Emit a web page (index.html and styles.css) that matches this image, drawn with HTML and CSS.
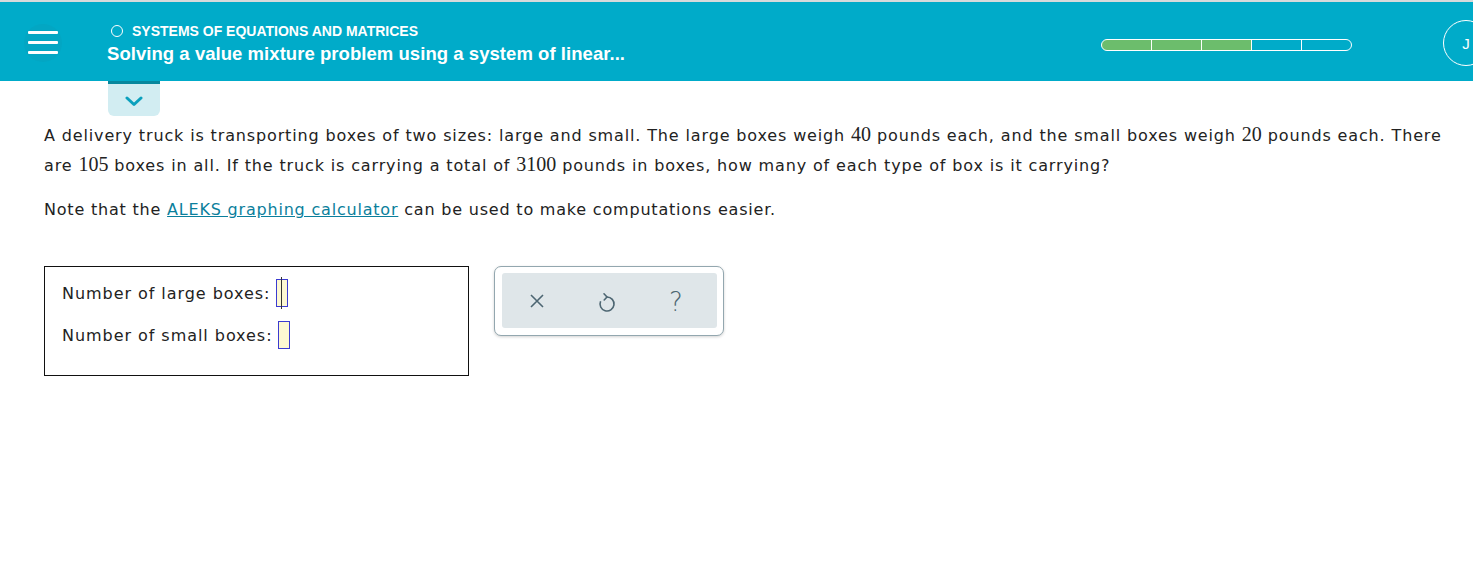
FILE: index.html
```html
<!DOCTYPE html>
<html>
<head>
<meta charset="utf-8">
<link rel="stylesheet" href="styles.css">
</head>
<body>
<header class="topbar">
  <button class="menu" aria-label="menu">
    <span></span><span></span><span></span>
  </button>
  <div class="titles">
    <div class="topic"><span class="ring"></span>SYSTEMS OF EQUATIONS AND MATRICES</div>
    <div class="lesson">Solving a value mixture problem using a system of linear...</div>
  </div>
  <div class="progress">
    <span class="seg done first"></span><span class="seg done"></span><span class="seg done"></span><span class="seg"></span><span class="seg last"></span>
  </div>
  <div class="avatar">J</div>
</header>
<div class="tab">
  <svg width="18" height="12" viewBox="0 0 18 12"><path d="M2 3 L9 9.5 L16 3" fill="none" stroke="#0aa0bd" stroke-width="3" stroke-linecap="round" stroke-linejoin="round"/></svg>
</div>
<main class="content">
  <p class="problem">A delivery truck is transporting boxes of two sizes: large and small. The large boxes weigh <span class="num">40</span> pounds each, and the small boxes weigh <span class="num">20</span> pounds each. There are <span class="num">105</span> boxes in all. If the truck is carrying a total of <span class="num">3100</span> pounds in boxes, how many of each type of box is it carrying?</p>
  <p class="note">Note that the <a href="#">ALEKS graphing calculator</a> can be used to make computations easier.</p>
  <div class="answer-row">
    <div class="answer">
      <div class="line">Number of large boxes: <span class="inp active"><span class="caret"></span></span></div>
      <div class="line">Number of small boxes: <span class="inp"></span></div>
    </div>
    <div class="tools">
      <div class="tools-inner">
        <svg class="ico x" width="16" height="16" viewBox="0 0 16 16"><path d="M2 2 L14 14 M14 2 L2 14" stroke="#4d6672" stroke-width="1.6" fill="none"/></svg>
        <svg class="ico undo" width="20" height="22" viewBox="0 0 20 22"><path d="M10 6 A7 7 0 1 1 3.6 10.2" fill="none" stroke="#4d6672" stroke-width="1.6"/><path d="M7 2.8 L10 6 L7.2 9" fill="none" stroke="#4d6672" stroke-width="1.6" stroke-linejoin="round" stroke-linecap="round"/></svg>
        <span class="help">?</span>
      </div>
    </div>
  </div>
</main>
</body>
</html>
```
FILE: styles.css
```css
* { box-sizing: border-box; }
html, body { margin: 0; padding: 0; background: #fff; }
body { font-family: "DejaVu Sans", Verdana, sans-serif; color: #222; overflow: hidden; }

.topbar {
  height: 81px;
  border-top: 2px solid #d6dadb;
  background: #00abc9;
  display: flex;
  align-items: center;
  overflow: hidden;
  color: #fff;
  font-family: "Liberation Sans", Arial, sans-serif;
}
.menu {
  margin-left: 24px;
  width: 38px;
  height: 38px;
  border-radius: 50%;
  border: none;
  background: #03a6c3;
  display: flex;
  flex-direction: column;
  justify-content: center;
  align-items: center;
  gap: 7px;
  padding: 0;
  margin-top: 2px;
}
.menu span { display: block; width: 30px; height: 3px; background: #fff; border-radius: 1px; }

.titles { margin-left: 45px; margin-top: 3px; }
.topic {
  font-size: 14px;
  font-weight: bold;
  letter-spacing: 0;
  display: flex;
  align-items: center;
  line-height: 16px;
}
.ring {
  width: 12px; height: 12px;
  border: 1.5px solid #fff;
  border-radius: 50%;
  margin-left: 4px;
  margin-right: 9px;
}
.lesson {
  font-size: 18.5px;
  font-weight: bold;
  letter-spacing: 0.05px;
  margin-top: 4px;
  line-height: 21px;
}

.progress {
  margin-left: auto;
  display: flex;
  margin-top: 6px;
}
.seg {
  width: 51px;
  height: 12px;
  border: 1.5px solid #fff;
  margin-left: -1px;
  background: transparent;
}
.seg.done { background: #6cbd6c; }
.seg.first { border-radius: 6px 0 0 6px; margin-left: 0; }
.seg.last { border-radius: 0 6px 6px 0; }

.avatar {
  margin-left: 91px;
  margin-right: -16px;
  width: 46px;
  height: 46px;
  flex: none;
  border: 1.5px solid #fff;
  border-radius: 50%;
  display: flex;
  align-items: center;
  justify-content: center;
  font-size: 15px;
  margin-top: 3px;
}

.tab {
  margin-left: 108px;
  width: 52px;
  height: 35px;
  background: #d2edf2;
  border-top: 3px solid #08879d;
  border-radius: 0 0 6px 6px;
  display: flex;
  justify-content: center;
  align-items: center;
  padding-top: 1px;
}

.content { padding: 0 20px 0 44px; }
.problem {
  margin: 5px 0 0 0;
  font-size: 16px;
  letter-spacing: 0.86px;
  line-height: 30px;
}
.num { font-family: "Liberation Serif", "Times New Roman", serif; font-size: 20px; letter-spacing: 0; line-height: 0; }
.note {
  margin: 14px 0 0 0;
  font-size: 16px;
  letter-spacing: 0.8px;
  line-height: 30px;
}
.note a { color: #0b7f9c; text-decoration: underline; }

.answer-row {
  display: flex;
  align-items: flex-start;
  margin-top: 41px;
}
.answer {
  width: 425px;
  height: 110px;
  border: 1px solid #111;
  padding: 12px 0 0 17px;
  font-size: 16px;
  letter-spacing: 0.95px;
}
.line { display: flex; align-items: center; height: 28px; margin-bottom: 14px; }
.inp {
  display: inline-block;
  width: 12px;
  height: 28px;
  border: 1px solid #3b3bd0;
  background: #fdf8d2;
  margin-left: 6px;
  position: relative;
}
.caret {
  position: absolute;
  left: 4px;
  top: -3px;
  width: 1px;
  height: 32px;
  background: #333;
}

.tools {
  margin-left: 25px;
  width: 230px;
  height: 70px;
  border: 1px solid #93a7af;
  border-radius: 7px;
  background: #fff;
  padding: 6px 6px 7px 7px;
  box-shadow: 0 1px 3px rgba(0,0,0,0.18);
}
.tools-inner {
  height: 100%;
  background: #dfe6e9;
  border-radius: 3px;
  display: flex;
  align-items: center;
  padding-left: 27px;
}
.tools-inner .x { margin-right: 52px; }
.tools-inner .undo { margin-right: 52px; margin-top: 2px; }
.help {
  font-family: "DejaVu Sans", sans-serif;
  color: #4d6672;
  font-size: 26px;
  font-weight: 200;
  margin-top: 2px;
}
```
